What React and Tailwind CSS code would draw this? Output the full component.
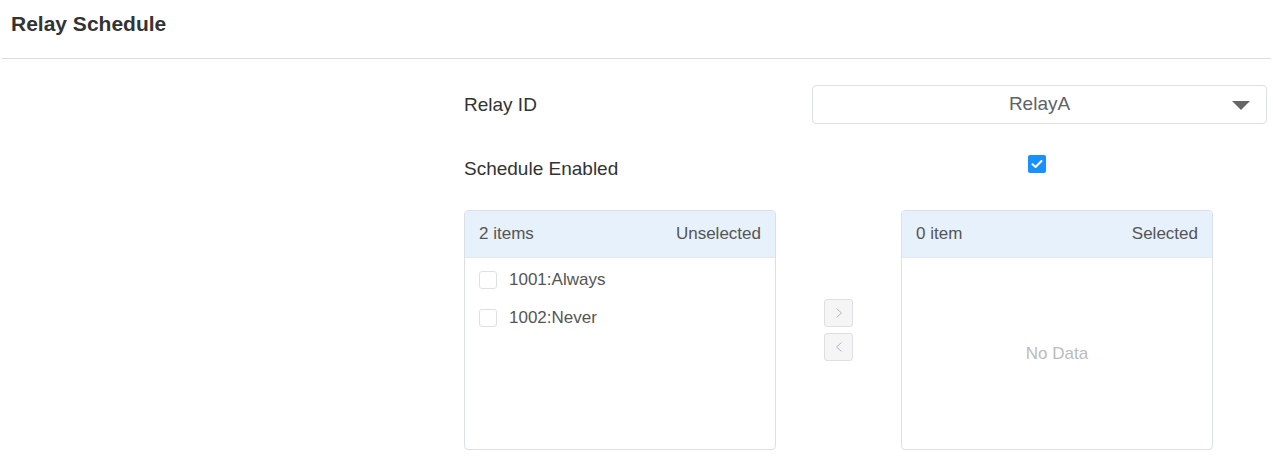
const font = { fontFamily: '"Liberation Sans", Arial, sans-serif' };

function Check({ checked }) {
  if (checked) {
    return (
      <span className="flex h-[18px] w-[18px] items-center justify-center rounded-[2px] bg-[#1890ff]">
        <svg width="12" height="10" viewBox="0 0 12 10" fill="none">
          <path d="M1.5 5.2 4.6 8 10.5 2" stroke="#fff" strokeWidth="2" strokeLinecap="round" strokeLinejoin="round" />
        </svg>
      </span>
    );
  }
  return <span className="block h-[18px] w-[18px] rounded-[3px] border border-[#dcdfe6] bg-white" />;
}

function Panel({ count, title, items }) {
  return (
    <div className="flex h-[240px] w-[312px] flex-col overflow-hidden rounded-[4px] border border-[#dcdfe6] bg-white">
      <div className="flex h-[47px] shrink-0 items-center justify-between border-b border-[#e4e7ed] bg-[#e6f1fc] px-[14px] text-[17px] text-[#555]">
        <span>{count}</span>
        <span>{title}</span>
      </div>
      {items.length ? (
        <ul className="pt-[3px]">
          {items.map((it) => (
            <li key={it} className="flex h-[38px] items-center px-[14px] text-[17px] text-[#555]">
              <Check />
              <span className="ml-[12px]">{it}</span>
            </li>
          ))}
        </ul>
      ) : (
        <div className="flex flex-1 items-center justify-center text-[17px] text-[#bbb]">No Data</div>
      )}
    </div>
  );
}

function ArrowBtn({ dir }) {
  return (
    <button className="flex h-[28px] w-[29px] items-center justify-center rounded-[3px] border border-[#dcdfe6] bg-[#f5f5f5]">
      <svg width="8" height="12" viewBox="0 0 8 12" fill="none">
        <path
          d={dir === 'right' ? 'M1.5 1.5 6.5 6 1.5 10.5' : 'M6.5 1.5 1.5 6 6.5 10.5'}
          stroke="#b4b8bf"
          strokeWidth="1"
        />
      </svg>
    </button>
  );
}

export default function App() {
  return (
    <div className="min-h-[461px] bg-white px-[2px]" style={font}>
      <div className="h-[59px] border-b border-[#d8dde4] pl-[9px] pt-[11px]">
        <h1 className="text-[21px] font-bold leading-[26px] text-[#333]">Relay Schedule</h1>
      </div>

      <div className="pl-[462px] pt-[26px]">
        <div className="flex h-[38px] items-center">
          <label className="mt-[1px] w-[348px] text-[19px] leading-[38px] text-[#333]">Relay ID</label>
          <div className="relative flex h-[39px] w-[455px] items-center justify-center rounded-[4px] border border-[#dcdfe6] text-[19px] text-[#606266]">
            RelayA
            <svg className="absolute right-[16px] top-[15px]" width="18" height="9" viewBox="0 0 18 9">
              <path d="M0 0h18L9 9z" fill="#666" />
            </svg>
          </div>
        </div>

        <div className="mt-[22px] flex items-start">
          <label className="mt-[5px] w-[348px] text-[19px] leading-[38px] text-[#333]">Schedule Enabled</label>
          <div className="flex h-[38px] w-[455px] items-center justify-center pr-[5px]">
            <Check checked />
          </div>
        </div>

        <div className="mt-[22px] flex items-center">
          <Panel count="2 items" title="Unselected" items={['1001:Always', '1002:Never']} />
          <div className="mx-[48px] flex flex-col gap-[6px]">
            <ArrowBtn dir="right" />
            <ArrowBtn dir="left" />
          </div>
          <Panel count="0 item" title="Selected" items={[]} />
        </div>
      </div>
    </div>
  );
}
